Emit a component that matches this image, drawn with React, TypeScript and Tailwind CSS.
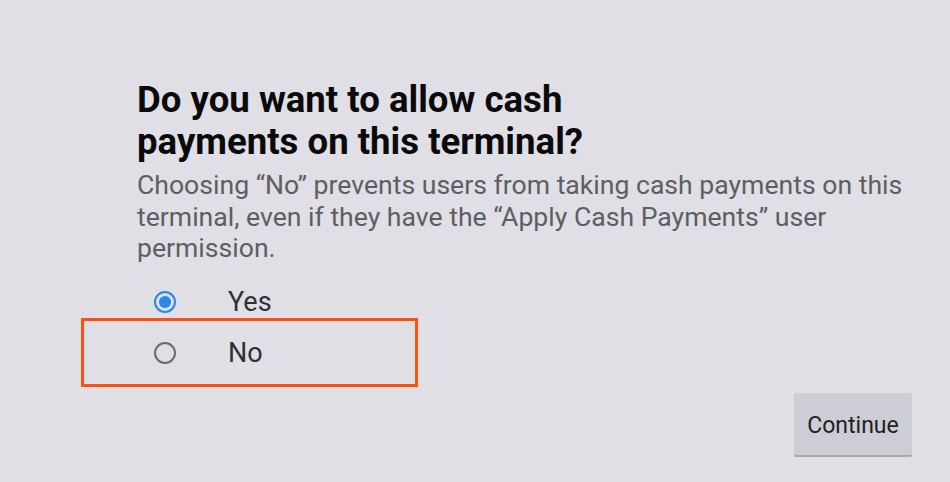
import React from "react";

export default function App() {
  return (
    <div
      className="relative w-[950px] h-[482px] bg-[#dfdfe5] overflow-hidden"
      style={{ fontFamily: "Roboto, 'Noto Sans', sans-serif" }}
    >
      <div className="pl-[137px] pt-[79px] pr-[30px]">
        <h1 className="text-[36.6px] leading-[42px] font-bold text-[#0a0a0a] w-[470px]">
          Do you want to allow cash payments on this terminal?
        </h1>
        <p className="mt-[6px] text-[26.6px] leading-[31.5px] text-[#5e5e62] w-[790px]">
          Choosing “No” prevents users from taking cash payments on this terminal, even if they
          have the “Apply Cash Payments” user permission.
        </p>
        <div className="mt-[13px] flex flex-col">
          <label className="flex items-center h-[51px]">
            <span className="ml-[17px] w-[22px] h-[22px] rounded-full border-[2px] border-[#2a86e8] flex items-center justify-center">
              <span className="w-[12px] h-[12px] rounded-full bg-[#2a86e8]" />
            </span>
            <span className="ml-[52px] text-[27px] text-[#303033]">Yes</span>
          </label>
          <label className="flex items-center h-[51px]">
            <span className="ml-[17px] w-[22px] h-[22px] rounded-full border-[2px] border-[#6b6b6e]" />
            <span className="ml-[52px] text-[27px] text-[#303033]">No</span>
          </label>
        </div>
      </div>
      <div className="absolute left-[81px] top-[318px] w-[337px] h-[69px] border-[3px] border-[#ff5012]" />
      <div className="absolute right-[38px] top-[393px]">
        <button className="w-[118px] h-[62px] pt-[4px] bg-[#cdcdd5] rounded-[2px] shadow-[0_2px_0_#a9a9b1] text-[23px] text-[#1f1f22]">
          Continue
        </button>
      </div>
    </div>
  );
}
